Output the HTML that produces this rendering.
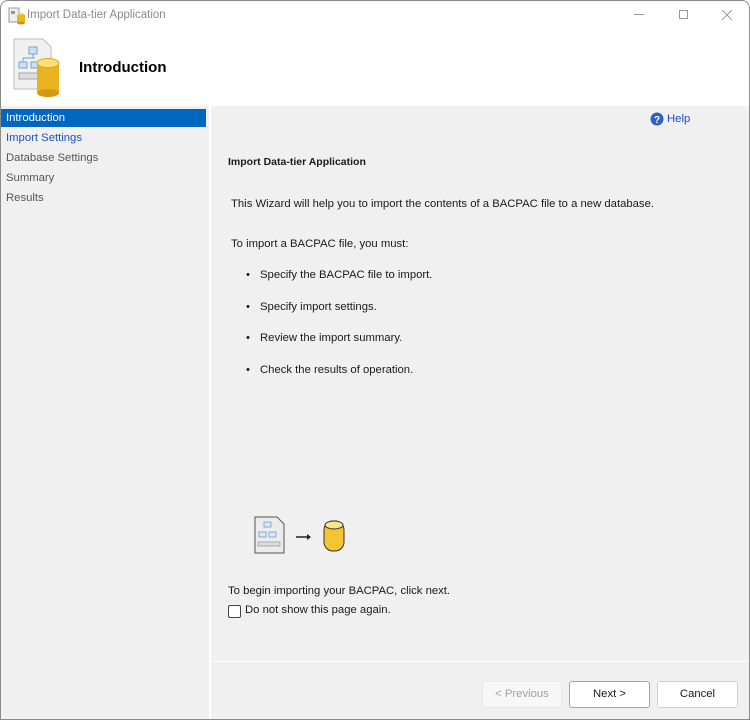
<!DOCTYPE html>
<html><head><meta charset="utf-8"><style>
*{margin:0;padding:0;box-sizing:border-box}
body{width:750px;height:720px;background:#fff;font-family:"Liberation Sans",sans-serif;font-size:11.3px;color:#1a1a1a;position:relative;overflow:hidden}
.win{position:absolute;left:0;top:0;width:750px;height:720px;border:1px solid #8a8a8a;border-radius:8px 8px 0 0;overflow:hidden;background:#fff}
.abs{position:absolute}
.nav div{position:absolute;left:0;width:205px;height:18px;padding-left:5px;line-height:18px;font-size:11.3px;color:#555}
.btn{position:absolute;top:680px;height:27px;border:1px solid #d0d0d0;background:#fff;text-align:center;line-height:25px;font-size:11.3px;border-radius:3px}
.bul{position:absolute;font-size:11.3px}
.bul span{position:absolute;left:-14px}
</style></head><body>
<div class="win">
<svg class="abs" style="left:7px;top:6px" width="18" height="18" viewBox="0 0 18 18"><rect x="1" y="1" width="10" height="14" fill="#eee" stroke="#999"/><rect x="3" y="4" width="4" height="3" fill="#7aa0d0"/><ellipse cx="13" cy="8" rx="4" ry="2" fill="#f6d24a"/><rect x="9" y="8" width="8" height="8" fill="#e8b820"/><ellipse cx="13" cy="16" rx="4" ry="1.5" fill="#c99510"/></svg>
<div class="abs" style="left:26px;top:8px;font-size:11.5px;color:#8a8a8a">Import Data-tier Application</div>
<div class="abs" style="left:633px;top:13px;width:10px;height:1px;background:#999"></div>
<div class="abs" style="left:678px;top:9px;width:9px;height:9px;border:1px solid #999"></div>
<svg class="abs" style="left:721px;top:9px" width="10" height="10"><path d="M0 0L10 10M10 0L0 10" stroke="#999" stroke-width="1"/></svg>
<svg class="abs" style="left:10px;top:36px" width="54" height="60" viewBox="0 0 54 60"><path d="M3 2H32L40 10V52H3Z" fill="#f0f0f0" stroke="#bbb"/><rect x="18" y="10" width="8" height="7" fill="#cfe0f4" stroke="#7aa0d0"/><rect x="8" y="25" width="8" height="6" fill="#cfe0f4" stroke="#7aa0d0"/><rect x="20" y="25" width="8" height="6" fill="#cfe0f4" stroke="#7aa0d0"/><path d="M22 17V21M12 21H24M12 21V25" stroke="#7aa0d0" fill="none"/><rect x="8" y="36" width="22" height="6" fill="#ddd" stroke="#aaa"/><rect x="26" y="26" width="22" height="30" fill="#e9b320"/><ellipse cx="37" cy="56" rx="11" ry="4" fill="#d39a10"/><ellipse cx="37" cy="26" rx="11" ry="4.5" fill="#fbe07a" stroke="#d9a520"/></svg>
<div class="abs" style="left:78px;top:58px;font-size:15px;font-weight:bold;color:#000">Introduction</div>
<div class="abs" style="left:0;top:105px;width:208px;height:615px;background:#f0f0f0"></div>
<div class="abs" style="left:208px;top:105px;width:2px;height:615px;background:#fff"></div>
<div class="nav">
<div style="top:108px;background:#0067c0;color:#fff">Introduction</div>
<div style="top:128px;color:#1a4fc8">Import Settings</div>
<div style="top:148px">Database Settings</div>
<div style="top:168px">Summary</div>
<div style="top:188px">Results</div>
</div>
<div class="abs" style="left:210px;top:105px;width:540px;height:615px;background:#f0f0f0"></div>
<svg class="abs" style="left:649px;top:111px" width="14" height="14"><circle cx="7" cy="7" r="6.5" fill="#2a62c8"/><text x="7" y="11" font-size="10" font-weight="bold" fill="#fff" text-anchor="middle" font-family="Liberation Sans">?</text></svg>
<div class="abs" style="left:666px;top:112px;color:#1a4fc8;font-size:11.3px">Help</div>
<div class="abs" style="left:227px;top:155px;font-weight:bold;font-size:10.5px">Import Data-tier Application</div>
<div class="abs" style="left:230px;top:197px">This Wizard will help you to import the contents of a BACPAC file to a new database.</div>
<div class="abs" style="left:230px;top:237px">To import a BACPAC file, you must:</div>
<div class="bul" style="left:259px;top:268px"><span>•</span>Specify the BACPAC file to import.</div>
<div class="bul" style="left:259px;top:300px"><span>•</span>Specify import settings.</div>
<div class="bul" style="left:259px;top:331px"><span>•</span>Review the import summary.</div>
<div class="bul" style="left:259px;top:363px"><span>•</span>Check the results of operation.</div>
<svg class="abs" style="left:253px;top:515px" width="96" height="40" viewBox="0 0 96 40"><path d="M1 1H23L30 8V37H1Z" fill="#ececec" stroke="#555"/><rect x="10" y="6" width="7" height="5" fill="#dce8f6" stroke="#8aa8d0"/><rect x="5" y="16" width="7" height="5" fill="#dce8f6" stroke="#8aa8d0"/><rect x="15" y="16" width="7" height="5" fill="#dce8f6" stroke="#8aa8d0"/><rect x="4" y="26" width="22" height="4" fill="#ddd" stroke="#aaa"/><path d="M42 21H55" stroke="#222" stroke-width="1.5"/><path d="M53 18L57 21L53 24Z" fill="#222"/><rect x="70" y="5" width="20" height="30" rx="9" fill="#f5c431" stroke="#333"/><ellipse cx="80" cy="9" rx="9" ry="4" fill="#fce58a" stroke="#333"/></svg>
<div class="abs" style="left:227px;top:584px">To begin importing your BACPAC, click next.</div>
<div class="abs" style="left:227px;top:604px;width:13px;height:13px;border:1px solid #444;background:#fff;border-radius:2px"></div>
<div class="abs" style="left:244px;top:603px">Do not show this page again.</div>
<div class="abs" style="left:210px;top:660px;width:540px;height:1px;background:#fff"></div>
<div class="btn" style="left:481px;width:80px;color:#a0a0a0;background:#f7f7f7;border-color:#e8e8e8">&lt; Previous</div>
<div class="btn" style="left:568px;width:81px;border:1px solid #7aaee0">Next &gt;</div>
<div class="btn" style="left:656px;width:81px">Cancel</div>
</div>
</body></html>
